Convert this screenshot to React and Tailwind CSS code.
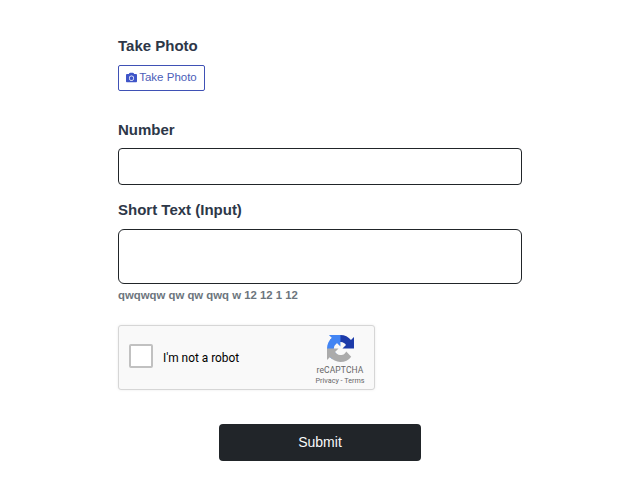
import { FaCamera } from "react-icons/fa";

function RecaptchaLogo() {
  return (
    <svg viewBox="0 0 64 64" className="w-[27px] h-[27px]">
      <path
        fill="#1c3aa9"
        d="M64 31.955l-.033-1.37V4.687l-7.16 7.16C50.948 4.674 42.033.093 32.05.093c-10.4 0-19.622 4.96-25.458 12.64l11.736 11.86a15.55 15.55 0 0 1 4.754-5.334c2.05-1.6 4.952-2.906 8.968-2.906.485 0 .86.057 1.135.163 4.976.393 9.288 3.14 11.828 7.124l-8.307 8.308L64 31.953"
      />
      <path
        fill="#4285f4"
        d="M31.862.094l-1.37.033H4.594l7.16 7.16C4.58 13.147 0 22.06 0 32.046c0 10.4 4.96 19.622 12.64 25.458l11.86-11.736a15.55 15.55 0 0 1-5.334-4.754c-1.6-2.05-2.906-4.952-2.906-8.968 0-.485.057-.86.163-1.135.393-4.976 3.14-9.288 7.124-11.828l8.308 8.307L31.86.094"
      />
      <path
        fill="#ababab"
        d="M.001 32.045l.033 1.37v25.898l7.16-7.16c5.86 7.173 14.774 11.754 24.76 11.754 10.4 0 19.622-4.96 25.458-12.64l-11.736-11.86a15.55 15.55 0 0 1-4.754 5.334c-2.05 1.6-4.952 2.906-8.968 2.906-.485 0-.86-.057-1.135-.163-4.976-.393-9.288-3.14-11.828-7.124l8.307-8.308c-10.12.04-21.55.065-27.295 0"
      />
    </svg>
  );
}

function App() {
  return (
    <div className="w-[640px] h-[480px] bg-white font-['Liberation_Sans',Arial,sans-serif] overflow-hidden">
      <div className="w-[404px] mx-auto pt-[37px] flex flex-col">
        {/* Take photo */}
        <label className="text-[15px] leading-[18px] font-bold text-[#2d3748]">Take Photo</label>
        <div className="mt-[10px]">
          <button className="w-[87px] h-[26px] flex items-center justify-center gap-[2px] border border-[#3f51b5] rounded-[2px] text-[11.5px] text-[#4c5eb9] bg-white">
            <FaCamera className="text-[11px] text-[#3f55c8] -mt-[1px]" />
            Take Photo
          </button>
        </div>

        {/* Number */}
        <label className="mt-[30px] text-[15px] leading-[18px] font-bold text-[#2d3748]">Number</label>
        <input className="mt-[9px] w-full h-[37px] border border-[#212529] rounded-[4px] bg-white" />

        {/* Short text */}
        <label className="mt-[16px] text-[15px] leading-[18px] font-bold text-[#2d3748]">Short Text (Input)</label>
        <input className="mt-[10px] w-full h-[55px] border border-[#212529] rounded-[6px] bg-white" />
        <p className="mt-[5px] text-[11.375px] leading-[13px] font-bold text-[#6c757d]">qwqwqw qw qw qwq w 12 12 1 12</p>

        {/* Captcha */}
        <div className="mt-[23px] w-[257px] h-[65px] flex items-center bg-[#f9f9f9] border border-[#d6d6d6] rounded-[3px] shadow-[0_0_3px_rgba(0,0,0,0.08)] font-['Roboto',sans-serif]">
          <div className="ml-[10px] mb-[4px] w-[24px] h-[24px] bg-white border-2 border-[#c1c1c1] rounded-[2px]" />
          <span className="ml-[10px] mt-[2px] flex-1 text-[11.9px] text-black">I'm not a robot</span>
          <div className="w-[60px] mr-[4px] self-start pt-[9px] flex flex-col items-center text-[#666]">
            <RecaptchaLogo />
            <span className="mt-[3px] text-[8.5px] leading-[10px] tracking-[0.1px]">reCAPTCHA</span>
            <span className="mt-[1px] text-[7.2px] leading-[9px]">Privacy - Terms</span>
          </div>
        </div>

        {/* Submit */}
        <div className="mt-[34px] flex justify-center">
          <button className="w-[202px] h-[37px] bg-[#212529] text-[#f8f9fa] text-[14px] rounded-[4px]">Submit</button>
        </div>
      </div>
    </div>
  );
}

export default App;
